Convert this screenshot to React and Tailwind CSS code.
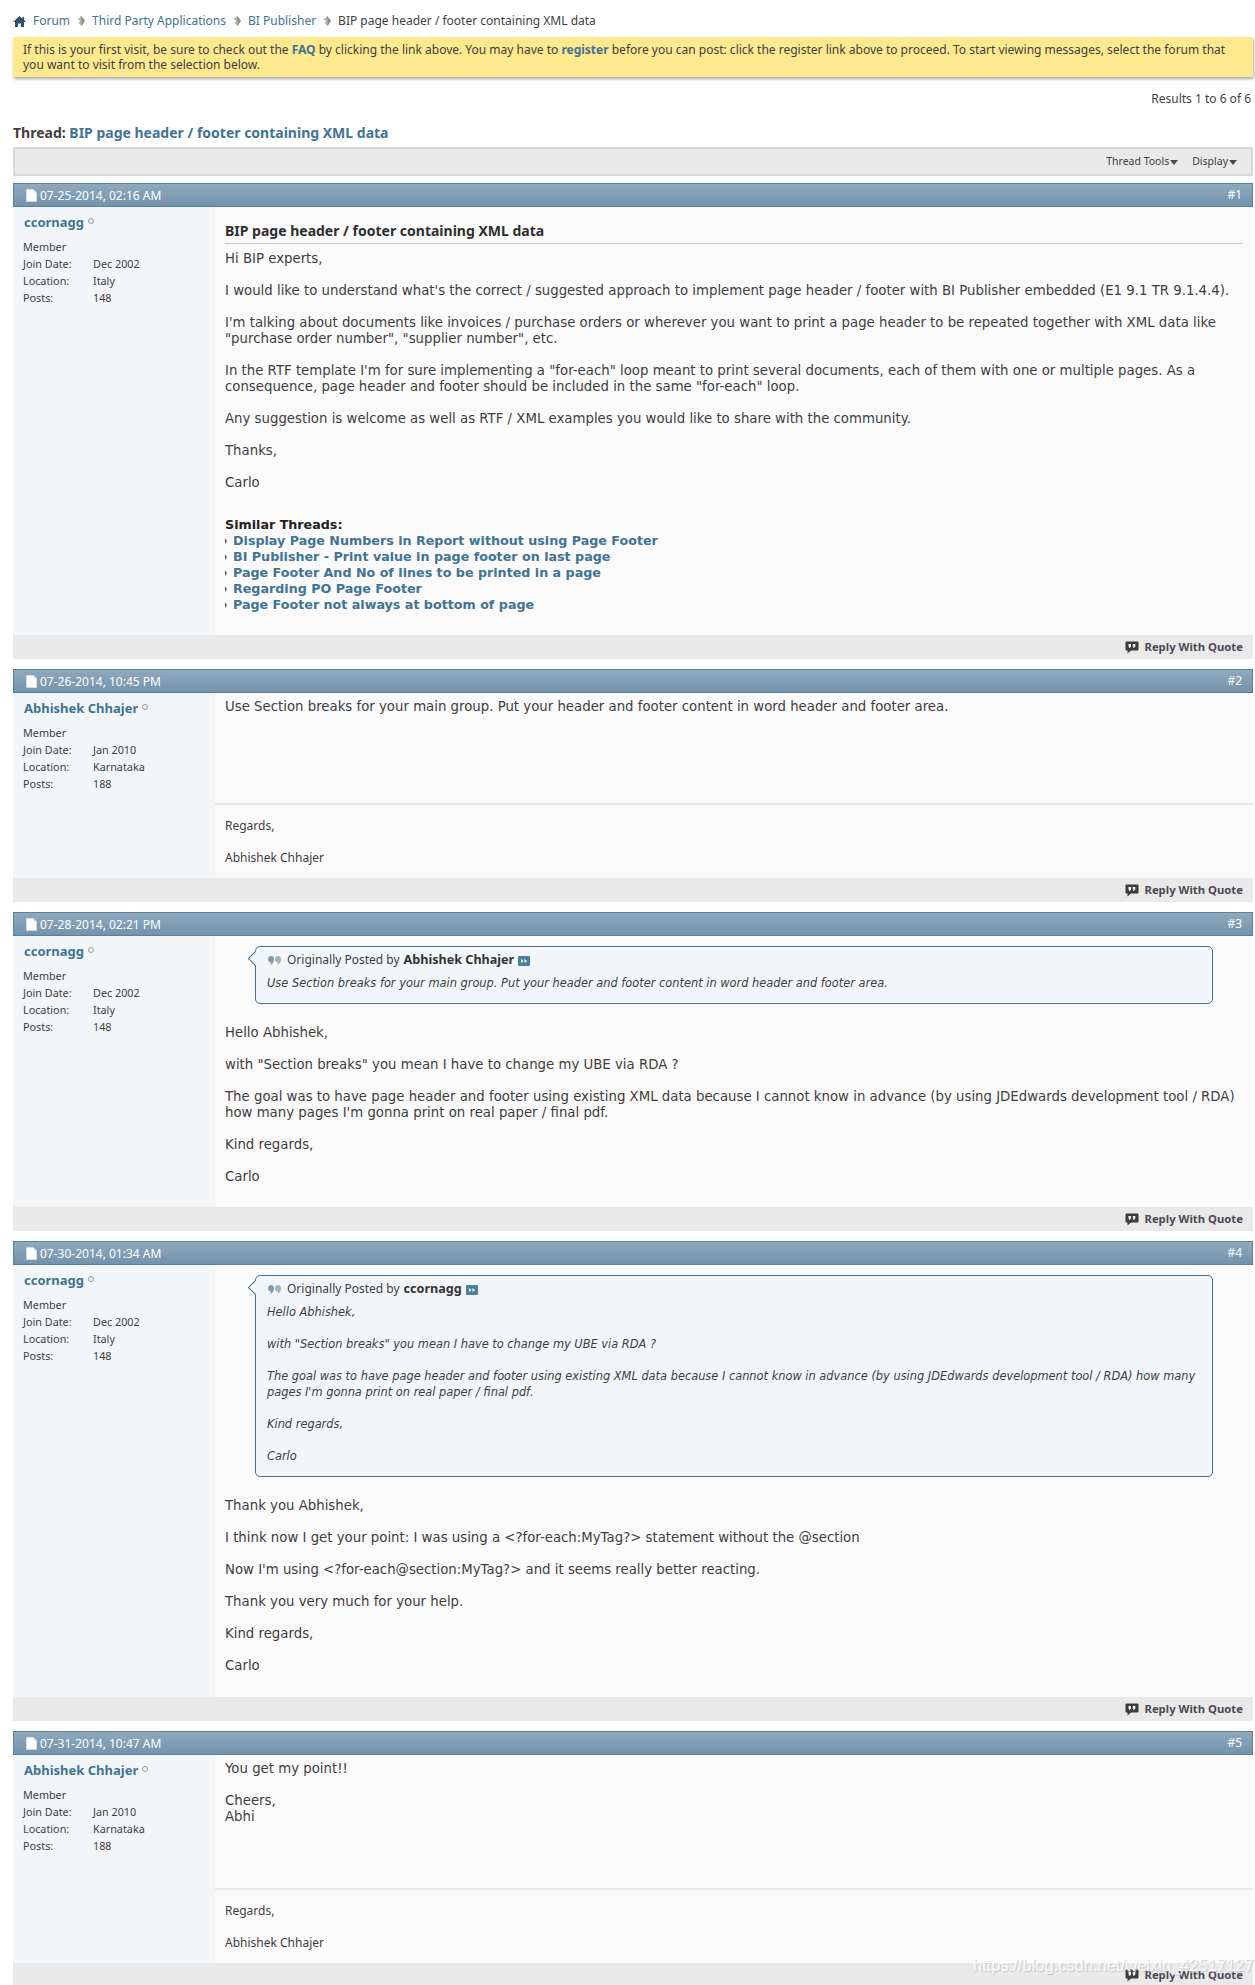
import { Fragment } from 'react'

const small = "font-['Noto_Sans',sans-serif] text-[12px]"
const side = "font-['Noto_Sans',sans-serif] text-[10.8px]"
const post = "font-['DejaVu_Sans',sans-serif] text-[13.3px] leading-[16px]"
const bold = "font-['DejaVu_Sans',sans-serif] text-[12.7px] font-bold"

function HomeIcon() {
  return (
    <svg width="13" height="11" viewBox="0 0 13 11" className="shrink-0">
      <path d="M6.5 0 L9.5 2.7 V1 H11 V4 L13 6 H11 V11 H8 V7.5 H5 V11 H2 V6 H0 Z" fill="#2d4f6b" />
    </svg>
  )
}

function CrumbArrow() {
  return (
    <svg width="8" height="10" viewBox="0 0 8 10" className="shrink-0">
      <path d="M4 0 L8 4.5 L4.5 10 L1.5 7 L3.5 5 L0.5 3.5 Z" fill="#b4b4b4" />
      <path d="M4 0 L8 4.5 L4.5 10 L4.5 5 Z" fill="#8f8f8f" />
    </svg>
  )
}

function DocIcon() {
  return (
    <svg width="11" height="13" viewBox="0 0 11 13" className="shrink-0">
      <path d="M0.5 0.5 H7.5 L10.5 3.5 V12.5 H0.5 Z" fill="#ffffff" stroke="#dfe6ea" strokeWidth="0.6" />
      <path d="M7.5 0.5 V3.5 H10.5" fill="#d5dde2" />
    </svg>
  )
}

function ReplyIcon() {
  return (
    <svg width="14" height="13" viewBox="0 0 14 13" className="shrink-0">
      <path d="M1.5 0.5 H12.5 Q13.5 0.5 13.5 1.5 V8.5 Q13.5 9.5 12.5 9.5 H6 L2.5 12.5 V9.5 H1.5 Q0.5 9.5 0.5 8.5 V1.5 Q0.5 0.5 1.5 0.5 Z" fill="#3d3d3d" />
      <path d="M3.5 3 H6 V5.5 L4.6 7 H3.8 L4.4 5.5 H3.5 Z M7.8 3 H10.3 V5.5 L8.9 7 H8.1 L8.7 5.5 H7.8 Z" fill="#ffffff" />
    </svg>
  )
}

function QuoteIcon() {
  return (
    <svg width="15" height="11" viewBox="0 0 15 11" className="shrink-0">
      <path d="M4 1 C6 1 7 2.5 7 4.5 C7 7 5.5 9 3 10.5 C4 9 4 8 3.8 7.5 C2 7.5 1 6 1 4.3 C1 2.3 2.3 1 4 1 Z" fill="#7f99ab" />
      <path d="M11 1 C13 1 14 2.5 14 4.5 C14 7 12.5 9 10 10.5 C11 9 11 8 10.8 7.5 C9 7.5 8 6 8 4.3 C8 2.3 9.3 1 11 1 Z" fill="#9fb4c2" />
    </svg>
  )
}

function ViewPostIcon() {
  return (
    <svg width="12" height="10" viewBox="0 0 12 10" className="shrink-0">
      <rect width="12" height="10" rx="1" fill="#4f7f9f" />
      <path d="M3 3 L5.5 5 L3 7 Z M6.5 3 L9 5 L6.5 7 Z" fill="#ffffff" />
    </svg>
  )
}

function Caret() {
  return <span className="ml-[1px] inline-block h-0 w-0 border-x-[4px] border-t-[5px] border-x-transparent border-t-[#4a4a4a] align-middle" />
}

function Quote({ author, children }) {
  return (
    <div className="relative mb-[21px] ml-[30px] mr-[30px] rounded-[5px] border border-[#417394] bg-[#f2f6f8] px-[11px] pb-[12px] pt-[4px]">
      <span className="absolute left-[-6.5px] top-[5.5px] h-[11px] w-[11px] rotate-45 border-b border-l border-[#417394] bg-[#f2f6f8]" />
      <div className={`relative flex h-[18px] items-center text-[#3e3e3e] ${small}`}>
        <QuoteIcon />
        <span className="ml-[5px]">Originally Posted by</span>
        <b className="ml-[4px] text-[12.6px] text-[#333]">{author}</b>
        <span className="ml-[4px] mt-[2px]"><ViewPostIcon /></span>
      </div>
      <div className="relative mt-[6px] font-['DejaVu_Sans',sans-serif] text-[11.4px] italic leading-[16px] text-[#3e3e3e]">{children}</div>
    </div>
  )
}

function UserInfo({ name, join, location, posts }) {
  const rows = [
    ['Join Date:', join],
    ['Location:', location],
    ['Posts:', posts],
  ]
  return (
    <div className={`w-[202px] shrink-0 border-r border-[#eef1f3] bg-[#f2f6f8] pl-[10px] pt-[6px] text-[#3e3e3e] ${side}`}>
      <div className="ml-[1px] flex items-center">
        <span className="font-['Noto_Sans',sans-serif] text-[13px] font-bold leading-[18px] text-[#417394]">{name}</span>
        <span className="ml-[4px] mb-[3px] h-[6px] w-[6px] rounded-full border border-[#9a9a9a] bg-[#f2f6f8]" />
      </div>
      <div className="mt-[7px] leading-[17px]">Member</div>
      {rows.map(([k, v]) => (
        <div key={k} className="flex leading-[17px]">
          <span className="w-[70px]">{k}</span>
          <span>{v}</span>
        </div>
      ))}
    </div>
  )
}

function Signature() {
  return (
    <div className={`h-[75px] border-t-2 border-[#e9e9e9] px-[10px] pt-[13px] leading-[16px] text-[#3e3e3e] ${small}`}>
      Regards,
      <br />
      <br />
      Abhishek Chhajer
    </div>
  )
}

function Post({ date, num, user, signature, minH, children }) {
  return (
    <div className="mb-[10px]">
      <div className="flex h-[24px] items-center justify-between border border-[#5d7f99] bg-gradient-to-b from-[#8fa9bd] to-[#7393ad] pl-[12px] pr-[10px] pt-[1px] text-white">
        <div className="flex items-center gap-[3px]">
          <DocIcon />
          <span className={small}>{date}</span>
        </div>
        <span className={`-mt-[2px] ${small}`}>{num}</span>
      </div>
      <div className="flex">
        <UserInfo {...user} />
        <div className="flex min-w-0 flex-1 flex-col bg-[#fafafa]">
          <div className={`px-[10px] pt-[6px] text-[#3e3e3e] ${post} ${minH}`}>{children}</div>
          {signature && <Signature />}
        </div>
      </div>
      <div className="flex h-[24px] items-center justify-end gap-[5px] bg-[#e9e9e9] pr-[10px] pt-[1px] font-['Noto_Sans',sans-serif] text-[11.3px] font-bold text-[#4a4a55]">
        <ReplyIcon />
        <span>Reply With Quote</span>
      </div>
    </div>
  )
}

const carlo = { name: 'ccornagg', join: 'Dec 2002', location: 'Italy', posts: '148' }
const abhishek = { name: 'Abhishek Chhajer', join: 'Jan 2010', location: 'Karnataka', posts: '188' }

const similar = [
  'Display Page Numbers in Report without using Page Footer',
  'BI Publisher - Print value in page footer on last page',
  'Page Footer And No of lines to be printed in a page',
  'Regarding PO Page Footer',
  'Page Footer not always at bottom of page',
]

export default function App() {
  return (
    <div className="relative h-[1985px] overflow-hidden bg-white pl-[13px] pr-[2px]">
      <div className={`flex h-[37px] items-center gap-[7px] pt-[5px] text-[#417394] ${small}`}>
        <HomeIcon />
        <span>Forum</span>
        <CrumbArrow />
        <span>Third Party Applications</span>
        <CrumbArrow />
        <span>BI Publisher</span>
        <CrumbArrow />
        <span className="text-[#3e3e3e]">BIP page header / footer containing XML data</span>
      </div>

      <div className={`h-[40px] bg-[#ffe98f] px-[10px] pt-[5px] leading-[15px] text-[#3e3e3e] shadow-[1px_2px_3px_#aaaaaa] ${small}`}>
        If this is your first visit, be sure to check out the <b className="text-[#417394]">FAQ</b> by clicking the link above. You may have to <b className="text-[#417394]">register</b> before you can post: click the register link above to proceed. To start viewing messages, select the forum that
        <br />
        you want to visit from the selection below.
      </div>

      <div className={`mt-[14px] pr-[2px] text-right leading-[16px] text-[#3e3e3e] ${small}`}>Results 1 to 6 of 6</div>

      <h1 className="mt-[16px] font-['Noto_Sans',sans-serif] text-[14px] font-bold leading-[19px] text-[#3e3e3e]">
        Thread: <span className="text-[#417394]">BIP page header / footer containing XML data</span>
      </h1>

      <div className="mt-[5px] flex h-[29px] items-center justify-end gap-[14px] border-2 border-[#d8d8d8] bg-[#e9e9e9] pr-[14px] pt-[1px] font-['Noto_Sans',sans-serif] text-[10.5px] text-[#3e3e3e]">
        <span>Thread Tools<Caret /></span>
        <span>Display<Caret /></span>
      </div>

      <div className="mt-[7px]">
        <Post date="07-25-2014, 02:16 AM" num="#1" user={carlo} minH="min-h-[428px]">
          <h2 className="mb-[7px] border-b border-[#c8c8c8] pb-[2px] pt-[8px] font-['Noto_Sans',sans-serif] text-[14px] font-bold leading-[20px] text-[#2e2e2e]">BIP page header / footer containing XML data</h2>
          Hi BIP experts,
          <br /><br />
          I would like to understand what's the correct / suggested approach to implement page header / footer with BI Publisher embedded (E1 9.1 TR 9.1.4.4).
          <br /><br />
          I'm talking about documents like invoices / purchase orders or wherever you want to print a page header to be repeated together with XML data like
          <br />
          "purchase order number", "supplier number", etc.
          <br /><br />
          In the RTF template I'm for sure implementing a "for-each" loop meant to print several documents, each of them with one or multiple pages. As a
          <br />
          consequence, page header and footer should be included in the same "for-each" loop.
          <br /><br />
          Any suggestion is welcome as well as RTF / XML examples you would like to share with the community.
          <br /><br />
          Thanks,
          <br /><br />
          Carlo
          <div className={`mt-[26px] text-[#222] ${bold}`}>Similar Threads:</div>
          {similar.map((s) => (
            <div key={s} className={`flex items-center text-[#417394] ${bold}`}>
              <span className="mr-[6px] h-0 w-0 border-y-[3px] border-l-[2px] border-y-transparent border-l-[#555]" />
              {s}
            </div>
          ))}
        </Post>

        <Post date="07-26-2014, 10:45 PM" num="#2" user={abhishek} signature minH="min-h-[110px]">
          Use Section breaks for your main group. Put your header and footer content in word header and footer area.
        </Post>

        <Post date="07-28-2014, 02:21 PM" num="#3" user={carlo} minH="min-h-[271px]">
          <div className="pt-[4px]">
            <Quote author="Abhishek Chhajer">Use Section breaks for your main group. Put your header and footer content in word header and footer area.</Quote>
          </div>
          Hello Abhishek,
          <br /><br />
          with "Section breaks" you mean I have to change my UBE via RDA ?
          <br /><br />
          The goal was to have page header and footer using existing XML data because I cannot know in advance (by using JDEdwards development tool / RDA)
          <br />
          how many pages I'm gonna print on real paper / final pdf.
          <br /><br />
          Kind regards,
          <br /><br />
          Carlo
        </Post>

        <Post date="07-30-2014, 01:34 AM" num="#4" user={carlo} minH="min-h-[432px]">
          <div className="pt-[4px]">
            <Quote author="ccornagg">
              {['Hello Abhishek,', 'with "Section breaks" you mean I have to change my UBE via RDA ?'].map((t) => (
                <Fragment key={t}>{t}<br /><br /></Fragment>
              ))}
              The goal was to have page header and footer using existing XML data because I cannot know in advance (by using JDEdwards development tool / RDA) how many
              <br />
              pages I'm gonna print on real paper / final pdf.
              <br /><br />
              Kind regards,
              <br /><br />
              Carlo
            </Quote>
          </div>
          Thank you Abhishek,
          <br /><br />
          I think now I get your point: I was using a &lt;?for-each:MyTag?&gt; statement without the @section
          <br /><br />
          Now I'm using &lt;?for-each@section:MyTag?&gt; and it seems really better reacting.
          <br /><br />
          Thank you very much for your help.
          <br /><br />
          Kind regards,
          <br /><br />
          Carlo
        </Post>

        <Post date="07-31-2014, 10:47 AM" num="#5" user={abhishek} signature minH="min-h-[133px]">
          You get my point!!
          <br /><br />
          Cheers,
          <br />
          Abhi
        </Post>
      </div>

      <div className="pointer-events-none absolute left-[973px] top-[1954px] font-['Liberation_Sans',sans-serif] text-[16.5px] leading-[22px] text-white/80 [text-shadow:1px_1px_1px_#c4c4c4]">
        https://blog.csdn.net/weixin_42517127
      </div>
    </div>
  )
}
